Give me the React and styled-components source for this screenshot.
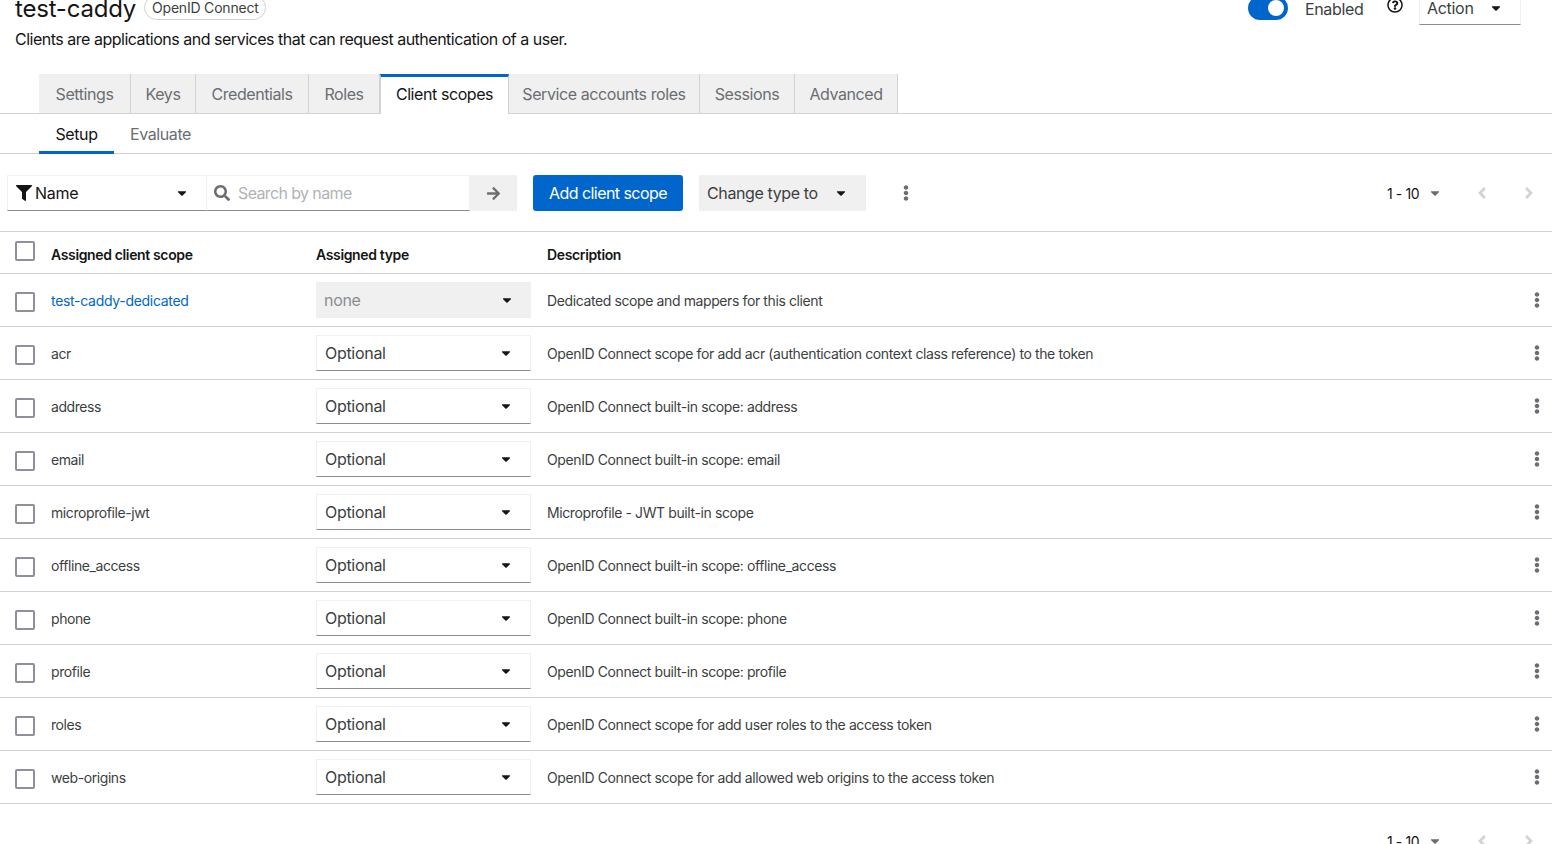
import React from "react";
import styled, { createGlobalStyle } from "styled-components";
import { FaFilter, FaSearch, FaArrowRight, FaEllipsisV, FaCaretDown, FaAngleLeft, FaAngleRight, FaRegQuestionCircle } from "react-icons/fa";

const Global = createGlobalStyle`
  html, body { margin: 0; padding: 0; height: 844px; overflow: hidden; background: #fff; }
  body { font-family: Inter, "Noto Sans", sans-serif; color: #151515; }
  * { box-sizing: border-box; }
`;

const Page = styled.div`
  margin-top: -9px;
  width: 1552px;
`;
const Head = styled.header`
  display: flex;
  align-items: center;
  height: 36px;
  padding-left: 15px;
`;
const Title = styled.h1`
  margin: 0;
  font-size: 24px;
  font-weight: 400;
  line-height: 36px;
  width: 129px;
  margin-top: -1px;
  letter-spacing: -0.2px;
`;
const Badge = styled.span`
  display: flex;
  align-items: center;
  height: 25px;
  padding: 0 7px;
  width: 122px;
  border: 1px solid #d2d2d2;
  border-radius: 13px;
  font-size: 14px;
  margin-top: -3px;
  white-space: nowrap;
  letter-spacing: -0.2px;
  color: #3c3f42;
`;
const HeadRight = styled.div`
  margin-left: auto;
  display: flex;
  align-items: center;
  padding-right: 31px;
`;
const Toggle = styled.span`
  position: relative;
  width: 40px;
  height: 24px;
  border-radius: 12px;
  background: #06c;
  margin-top: -2px;
  &::after {
    content: "";
    position: absolute;
    right: 4px;
    top: 4px;
    width: 16px;
    height: 16px;
    border-radius: 50%;
    background: #fff;
  }
`;
const ToggleLabel = styled.span`
  margin-left: 17px;
  width: 82px;
  font-size: 16px;
  color: #3c3f42;
  letter-spacing: -0.35px;
`;
const Help = styled.span`
  display: flex;
  width: 32px;
  font-size: 16px;
  margin-top: -8px;
`;
const ActionSelect = styled.div`
  display: flex;
  align-items: center;
  justify-content: space-between;
  width: 102px;
  height: 36px;
  margin-top: -4px;
  padding: 2px 17px 0 7px;
  border: 1px solid #f0f0f0;
  border-bottom-color: #8a8d90;
  font-size: 16px;
  letter-spacing: -0.3px;
  color: #3c3f42;
  svg { color: #151515; font-size: 14px; }
`;
const Sub = styled.p`
  margin: 0;
  padding-left: 15px;
  font-size: 16px;
  line-height: 24px;
  letter-spacing: -0.49px;
  color: #151515;
`;
const Tabs = styled.nav`
  display: flex;
  height: 40px;
  margin-top: 23px;
  padding-left: 39px;
  border-bottom: 1px solid #d2d2d2;
`;
const Tab = styled.div`
  width: ${p => p.$w}px;
  flex: none;
  height: 39px;
  display: flex;
  align-items: center;
  justify-content: center;
  font-size: 16px;
  letter-spacing: -0.42px;
  white-space: nowrap;
  color: ${p => (p.$active ? "#151515" : "#6a6e73")};
  background: ${p => (p.$active ? "#fff" : "#f0f0f0")};
  border-right: 1px solid #d2d2d2;
  border-top: ${p => (p.$active ? "3px solid #06c" : "0")};
  padding-top: ${p => (p.$active ? "0" : "1px")};
  ${p => p.$active && "height: 40px; border-left: 1px solid #d2d2d2; margin-bottom: -1px; padding-bottom: 3px;"}
`;
const SubTabs = styled.nav`
  display: flex;
  height: 40px;
  padding-left: 39px;
  border-bottom: 1px solid #d2d2d2;
`;
const SubTab = styled.div`
  width: ${p => p.$w}px;
  height: 40px;
  display: flex;
  align-items: center;
  justify-content: center;
  font-size: 16px;
  letter-spacing: -0.4px;
  color: ${p => (p.$active ? "#151515" : "#6a6e73")};
  border-bottom: ${p => (p.$active ? "3px solid #06c" : "0")};
  padding-top: ${p => (p.$active ? "2px" : "0")};
  padding-bottom: ${p => (p.$active ? "0" : "1px")};
`;
const Toolbar = styled.div`
  display: flex;
  align-items: center;
  height: 36px;
  margin-top: 21px;
  padding-left: 7px;
`;
const FilterSelect = styled.div`
  display: flex;
  align-items: center;
  width: 200px;
  height: 36px;
  padding: 0 17px 0 8px;
  border: 1px solid #f0f0f0;
  border-bottom-color: #8a8d90;
  font-size: 16px;
  letter-spacing: -0.3px;
  color: #151515;
  svg:first-child { margin-right: 3px; font-size: 16px; }
  svg:last-child { margin-left: auto; color: #151515; font-size: 14px; }
`;
const SearchField = styled.div`
  display: flex;
  align-items: center;
  width: 263px;
  height: 36px;
  padding-left: 7px;
  border: 1px solid #f0f0f0;
  border-left: 0;
  border-bottom-color: #8a8d90;
  font-size: 16px;
  letter-spacing: -0.62px;
  color: #b1b3b6;
  svg { color: #6a6e73; font-size: 16px; margin-right: 8px; }
`;
const ArrowBtn = styled.div`
  width: 47px;
  height: 36px;
  display: flex;
  align-items: center;
  justify-content: center;
  background: #f0f0f0;
  color: #6a6e73;
  font-size: 15px;
`;
const PrimaryBtn = styled.button`
  width: 150px;
  height: 36px;
  margin-left: 16px;
  border: 0;
  border-radius: 3px;
  background: #06c;
  color: #fff;
  font: inherit;
  font-size: 16px;
  letter-spacing: -0.55px;
  padding: 0;
`;
const ChangeType = styled.div`
  width: 167px;
  height: 36px;
  margin-left: 16px;
  display: flex;
  align-items: center;
  justify-content: space-between;
  padding: 0 18px 0 8px;
  background: #f0f0f0;
  font-size: 16px;
  letter-spacing: -0.38px;
  color: #3c3f42;
  svg { color: #151515; font-size: 14px; }
`;
const Kebab = styled.span`
  display: flex;
  color: #6a6e73;
  font-size: 16px;
`;
const ToolKebab = styled(Kebab)`
  margin-left: 32px;
`;
const Pager = styled.div`
  margin-left: auto;
  display: flex;
  align-items: center;
  font-size: 14px;
  color: #151515;
  letter-spacing: -0.4px;
`;
const PagerCount = styled.span`
  width: 41px;
`;
const PagerCaret = styled.span`
  display: flex;
  width: 30px;
  color: #6a6e73;
  font-size: 14px;
`;
const PagerArrow = styled.span`
  display: flex;
  justify-content: center;
  width: 47px;
  color: #d2d2d2;
  font-size: 18px;
`;
const BottomPager = styled(Pager)`
  justify-content: flex-end;
  margin-top: 27px;
  height: 20px;
`;
const Table = styled.div`
  margin-top: 20px;
  border-top: 1px solid #d2d2d2;
`;
const HeadRow = styled.div`
  display: grid;
  grid-template-columns: 36px 265px 231px 1fr;
  height: 42px;
  align-items: center;
  padding-left: 15px;
  border-bottom: 1px solid #d2d2d2;
  font-size: 14px;
  font-weight: 600;
  letter-spacing: -0.36px;
  line-height: 1;
  > span { padding-top: 4px; }
`;
const Row = styled.div`
  display: grid;
  grid-template-columns: 36px 265px 231px 1fr 40px;
  height: 53px;
  align-items: center;
  padding-left: 15px;
  border-bottom: 1px solid #d2d2d2;
  font-size: 14px;
`;
const Check = styled.span`
  display: block;
  width: 20px;
  height: 20px;
  border: 2px solid #8f8f9f;
  border-radius: 2px;
  background: #fff;
  margin-top: ${p => p.$mt}px;
`;
const ScopeName = styled.span`
  padding-top: 1px;
  letter-spacing: ${p => (p.$link ? "-0.3px" : "-0.42px")};
  color: ${p => (p.$link ? "#06c" : "#3c3f42")};
`;
const TypeSelect = styled.div`
  width: 215px;
  height: 36px;
  display: flex;
  align-items: center;
  justify-content: space-between;
  padding: 0 17px 0 8px;
  font-size: 16px;
  letter-spacing: -0.3px;
  color: ${p => (p.$disabled ? "#8a8d90" : "#3c3f42")};
  background: ${p => (p.$disabled ? "#f0f0f0" : "#fff")};
  border: ${p => (p.$disabled ? "0" : "1px solid #f0f0f0")};
  border-bottom-color: #8a8d90;
  svg { color: #151515; font-size: 14px; }
`;
const Desc = styled.span`
  padding-top: 1px;
  letter-spacing: -0.39px;
  color: #3c3f42;
  white-space: nowrap;
`;
const RowKebab = styled(Kebab)`
  justify-content: flex-end;
  padding-right: 7px;
`;

const rows = [
  ["test-caddy-dedicated", "none", "Dedicated scope and mappers for this client"],
  ["acr", "Optional", "OpenID Connect scope for add acr (authentication context class reference) to the token"],
  ["address", "Optional", "OpenID Connect built-in scope: address"],
  ["email", "Optional", "OpenID Connect built-in scope: email"],
  ["microprofile-jwt", "Optional", "Microprofile - JWT built-in scope"],
  ["offline_access", "Optional", "OpenID Connect built-in scope: offline_access"],
  ["phone", "Optional", "OpenID Connect built-in scope: phone"],
  ["profile", "Optional", "OpenID Connect built-in scope: profile"],
  ["roles", "Optional", "OpenID Connect scope for add user roles to the access token"],
  ["web-origins", "Optional", "OpenID Connect scope for add allowed web origins to the access token"],
];
const tabs = [["Settings", 92], ["Keys", 65], ["Credentials", 113], ["Roles", 71], ["Client scopes", 129], ["Service accounts roles", 191], ["Sessions", 95], ["Advanced", 103]];

const PagerBits = () => (
  <>
    <PagerCount>1 - 10</PagerCount>
    <PagerCaret><FaCaretDown /></PagerCaret>
    <PagerArrow><FaAngleLeft /></PagerArrow>
    <PagerArrow><FaAngleRight /></PagerArrow>
  </>
);

export default function App() {
  return (
    <Page>
      <Global />
      <Head>
        <Title>test-caddy</Title>
        <Badge>OpenID Connect</Badge>
        <HeadRight>
          <Toggle />
          <ToggleLabel>Enabled</ToggleLabel>
          <Help><FaRegQuestionCircle /></Help>
          <ActionSelect>Action <FaCaretDown /></ActionSelect>
        </HeadRight>
      </Head>
      <Sub>Clients are applications and services that can request authentication of a user.</Sub>
      <Tabs>
        {tabs.map(([t, w]) => <Tab key={t} $w={w} $active={t === "Client scopes"}>{t}</Tab>)}
      </Tabs>
      <SubTabs>
        <SubTab $w={75} $active>Setup</SubTab>
        <SubTab $w={93}>Evaluate</SubTab>
      </SubTabs>
      <Toolbar>
        <FilterSelect><FaFilter />Name<FaCaretDown /></FilterSelect>
        <SearchField><FaSearch />Search by name</SearchField>
        <ArrowBtn><FaArrowRight /></ArrowBtn>
        <PrimaryBtn>Add client scope</PrimaryBtn>
        <ChangeType>Change type to <FaCaretDown /></ChangeType>
        <ToolKebab><FaEllipsisV /></ToolKebab>
        <Pager><PagerBits /></Pager>
      </Toolbar>
      <Table>
        <HeadRow>
          <Check $mt={-4} />
          <span>Assigned client scope</span>
          <span>Assigned type</span>
          <span>Description</span>
        </HeadRow>
        {rows.map(([n, t, d], i) => (
          <Row key={n}>
            <Check $mt={3} />
            <ScopeName $link={i === 0}>{n}</ScopeName>
            <TypeSelect $disabled={i === 0}>{t}<FaCaretDown /></TypeSelect>
            <Desc>{d}</Desc>
            <RowKebab><FaEllipsisV /></RowKebab>
          </Row>
        ))}
      </Table>
      <BottomPager><PagerBits /></BottomPager>
    </Page>
  );
}
